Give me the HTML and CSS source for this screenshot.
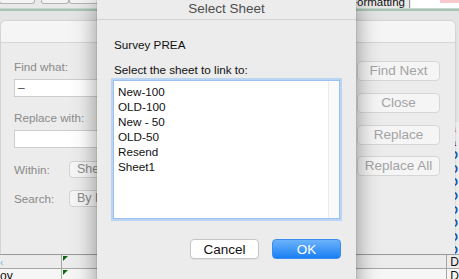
FILE: index.html
```html
<!DOCTYPE html>
<html>
<head>
<meta charset="utf-8">
<link rel="stylesheet" href="styles.css">
</head>
<body>
<div class="desk">
  <div class="app">
    <div class="toolbar">
      <span class="seg seg1"></span>
      <span class="seg seg2"></span>
      <span class="seg seg3"></span>
      <span class="fmt">Formatting</span>
      <span class="white"><span class="pink"></span></span>
    </div>
    <div class="greenline"></div>
    <div class="grid-right">
      <div class="g o">a</div>
      <div class="g r">a</div>
      <div class="g b">D</div>
      <div class="g b">D</div>
      <div class="g b">D</div>
      <div class="g b">D</div>
      <div class="g b">D</div>
      <div class="g b">D</div>
      <div class="g b">D</div>
      <div class="g b">D</div>
    </div>
    <div class="rows">
      <div class="row"><span class="c1"><span class="mark">‹</span></span><span class="c2"><span class="tri"></span></span><span class="c3">D</span></div>
      <div class="row"><span class="c1">oy</span><span class="c2"><span class="tri"></span></span><span class="c3">D</span></div>
    </div>
  </div>

  <div class="find">
    <div class="find-title"></div>
    <div class="find-body">
      <div class="find-left">
        <div class="lbl l1">Find what:</div>
        <div class="field f1">–</div>
        <div class="lbl l2">Replace with:</div>
        <div class="field f2"></div>
        <div class="prow p1"><span class="lbl">Within:</span><span class="popup">Sheet</span></div>
        <div class="prow p2"><span class="lbl">Search:</span><span class="popup">By Rows</span></div>
      </div>
      <div class="find-right">
        <div class="fbtn">Find Next</div>
        <div class="fbtn">Close</div>
        <div class="fbtn">Replace</div>
        <div class="fbtn">Replace All</div>
      </div>
    </div>
  </div>

  <div class="sheet">
    <div class="sheet-title">Select Sheet</div>
    <div class="sheet-body">
      <div class="txt t1">Survey PREA</div>
      <div class="txt t2">Select the sheet to link to:</div>
      <div class="list">
        <div class="items">
          <div class="item">New-100</div>
          <div class="item">OLD-100</div>
          <div class="item">New - 50</div>
          <div class="item">OLD-50</div>
          <div class="item">Resend</div>
          <div class="item">Sheet1</div>
        </div>
        <div class="scroll"></div>
      </div>
      <div class="buttons">
        <div class="btn cancel">Cancel</div>
        <div class="btn ok">OK</div>
      </div>
    </div>
  </div>
</div>
</body>
</html>
```
FILE: styles.css
```css
html, body { margin: 0; padding: 0; }
body {
  width: 459px; height: 279px; overflow: hidden;
  font-family: "Liberation Sans", Arial, sans-serif;
  font-size: 11.7px;
  background: #ececec;
}
.desk { position: relative; width: 459px; height: 279px; overflow: hidden; }
.app { position: absolute; left: 0; top: 0; width: 459px; height: 279px; background: #e4e4e4; }
.toolbar { height: 8px; position: relative; background: #e9e9e9; display: flex; }
.seg { display: block; height: 3px; border: 1px solid #b4b4b4; border-top: none; border-radius: 0 0 3px 3px; background: #f3f3f3; }
.seg1 { width: 34px; margin-left: -1px; }
.seg2 { width: 26px; margin-left: 6px; }
.seg3 { width: 28px; margin-left: 0; }
.fmt { position: absolute; left: 350px; top: -4px; font-size: 11.5px; line-height: 13px; color: #111; width: 59px; height: 12px; border-right: 1px solid #9a9a9a; overflow: hidden; }
.white { position: absolute; left: 411px; top: 0; width: 48px; height: 8px; background: #fff; }
.pink { position: absolute; left: 29px; top: 0; width: 19px; height: 3px; background: #f7c8cc; }
.greenline { height: 2px; background: #a7c4b2; border-top: 1px solid #c9d8ce; }
.grid-right { position: absolute; left: 450px; top: 122px; width: 9px; display: flex; flex-direction: column; font-size: 11px; font-weight: bold; background: #ededed; }
.g { height: 13.6px; line-height: 13.6px; overflow: hidden; }
.o { color: #e38a1a; }
.r { color: #b01530; }
.b { color: #1552a8; }
.rows { position: absolute; left: 0; top: 254px; width: 459px; }
.row { display: flex; height: 13px; border-top: 1px solid #a6a6a6; background: #ececec; font-size: 12px; line-height: 14px; color: #111; }
.row + .row { background: #f6f6f6; }
.c1 { width: 61px; border-right: 1px solid #a6a6a6; overflow: hidden; }
.c2 { width: 388px; border-right: 1px solid #a6a6a6; position: relative; }
.c3 { padding-left: 3px; }
.mark { color: #6eb6e8; font-size: 10px; }
.tri { position: absolute; left: 1px; top: 1px; width: 0; height: 0; border-top: 5px solid #116611; border-right: 5px solid transparent; }

.find {
  position: absolute; left: 1px; top: 21px; width: 454px; height: 233px;
  background: #ececec; border-radius: 5px 5px 0 0;
  box-shadow: 0 0 2px rgba(0,0,0,0.25);
}
.find-title { height: 21px; background: #f5f5f5; border-bottom: 1px solid #d6d6d6; border-radius: 5px 5px 0 0; }
.find-body { display: flex; justify-content: space-between; padding: 0 15px 0 13px; }
.find-left { display: flex; flex-direction: column; width: 300px; }
.lbl { color: #8a8a8a; }
.l1 { margin-top: 16px; line-height: 16px; }
.field { margin-top: 4px; height: 16px; background: #fff; border: 1px solid #cdcdcd; color: #555; padding-left: 3px; line-height: 16px; font-size: 12px; }
.l2 { margin-top: 13px; line-height: 16px; }
.prow { display: flex; align-items: center; height: 17px; }
.prow .lbl { width: 55px; }
.p1 { margin-top: 13px; }
.p2 { margin-top: 12px; }
.popup { height: 15px; border: 1px solid #d2d2d2; border-radius: 4px; background: #f6f6f6; color: #8a8a8a; padding-left: 7px; width: 80px; line-height: 15px; font-size: 12.5px; }
.find-right { display: flex; flex-direction: column; width: 83px; padding-top: 18px; gap: 12px; }
.fbtn { height: 18px; border: 1px solid #d6d6d6; border-radius: 4px; background: #f5f5f5; color: #a3a3a3; text-align: center; line-height: 18px; font-size: 13.5px; }
.fbtn:last-child { margin-top: -1px; }

.sheet {
  position: absolute; left: 97px; top: 0; width: 259px; height: 300px;
  background: #ececec;
  box-shadow: 0 4px 22px rgba(0,0,0,0.42), 0 0 1px rgba(0,0,0,0.4);
}
.sheet-title { height: 19px; border-bottom: 1px solid #d2d2d2; background: #ececec; text-align: center; color: #4e4e4e; line-height: 17px; font-size: 13.5px; }
.sheet-body { padding: 0 15px; display: flex; flex-direction: column; }
.txt { color: #111; line-height: 16px; padding-left: 2px; }
.t1 { margin-top: 17px; }
.t2 { margin-top: 9px; }
.list {
  height: 137px; display: flex;
  background: #fff; border: 1px solid #9cc1ef;
  box-shadow: 0 0 0 2px #bad4f4;
  margin: 2px 1px 0 1px;
}
.items { flex: 1; padding: 3px 0 0 4px; }
.item { line-height: 15px; color: #111; }
.scroll { width: 10px; border-left: 1px solid #ebebeb; background: #fafafa; }
.buttons { display: flex; justify-content: flex-end; gap: 13px; margin-top: 20px; }
.btn { width: 69px; height: 20px; box-sizing: border-box; border-radius: 4px; text-align: center; line-height: 19px; font-size: 13.5px; }
.cancel { background: #fff; border: 1px solid #c6c6c6; color: #111; box-shadow: 0 1px 0 rgba(0,0,0,0.05); }
.ok { background: linear-gradient(#6cb3fa, #1a7ff5); border: 1px solid #3a8cf0; color: #fff; }
```
